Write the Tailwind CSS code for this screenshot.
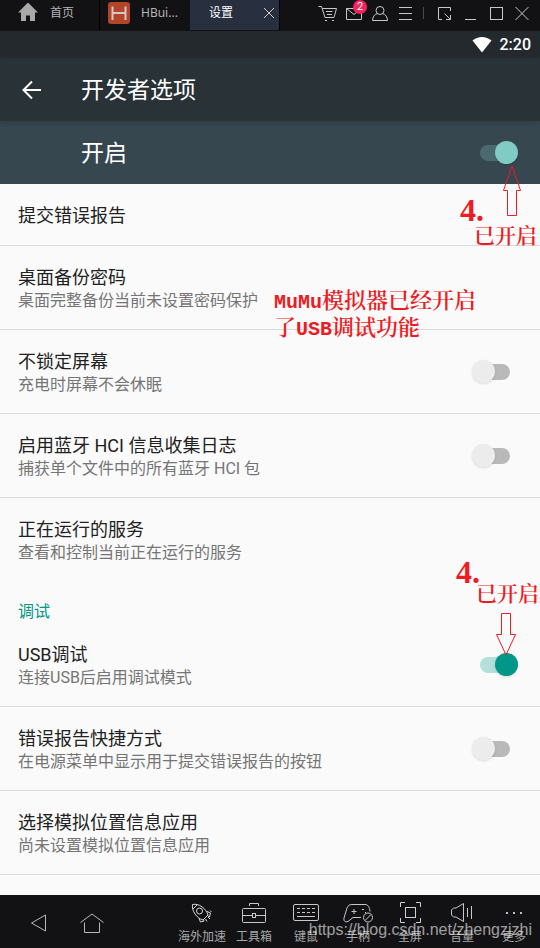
<!DOCTYPE html>
<html lang="zh-CN">
<head>
<meta charset="utf-8">
<meta name="viewport" content="width=device-width, initial-scale=1">
<title>开发者选项</title>
<script src="https://cdn.jsdelivr.net/npm/@tailwindcss/browser@4"></script>
</head>
<body class="bg-[#fafafa] font-[Roboto,'Noto_Sans_CJK_SC',sans-serif] text-[#212121]">
<div class="relative flex min-h-screen flex-col overflow-hidden">

  <!-- Emulator tab bar -->
  <div class="flex h-[31px] justify-between bg-[#121214] text-xs text-[#b4b4b4]">
    <nav class="flex h-[30px]">
      <a href="#" class="flex w-[100px] items-center gap-3 border-r border-black pb-1 pl-[18px]">
        <svg class="h-5 w-5" viewBox="0 1 20 20" fill="#a9a9a9"><path d="M10 0.500L20 10.500H17V19H12V13.500H8V19H3V10.500H0Z"/></svg>
        <span>首页</span>
      </a>
      <a href="#" class="flex w-[90px] items-center gap-[11px] pb-1 pl-2">
        <svg class="h-[22px] w-[22px]" viewBox="0 0 22 22" fill="none"><rect width="22" height="22" rx="3" fill="#b2452a"/><path d="M4.500 4.500V18M17.500 4.500V18M4.500 11H17.500" stroke="#d5c9c4" stroke-width="2"/></svg>
        <span class="font-['Noto_Sans','Noto_Sans_CJK_SC',sans-serif]">HBui...</span>
      </a>
      <div class="flex w-[90px] items-center justify-between border-r border-black bg-[#282f3f] pr-1 pb-1 pl-[19px] text-white">
        <a href="#">设置</a>
        <button aria-label="关闭标签"><svg class="h-3 w-3" viewBox="0 0 12 12" fill="none" stroke="#d0d0d0"><path d="M1 1L11 11M11 1L1 11"/></svg></button>
      </div>
    </nav>
    <div class="flex items-center gap-2 pr-[11px] pb-[5px]">
      <button aria-label="商城"><svg class="h-[18px] w-[19px]" viewBox="0 0 19 18" fill="none" stroke="#c8c8c8"><path d="M0.500 2.500H3.500L7 13.500H16M4.500 4.500H18.500L16 13.500M8 7.500H14.500M9 10.500H14"/><path d="M7 16.500H9M14 16.500H16"/></svg></button>
      <button aria-label="消息" class="relative"><svg class="h-[18px] w-[18px]" viewBox="0 0 18 18" fill="none" stroke="#c8c8c8"><path d="M1.500 4.500H16.500V15.500H1.500ZM1.500 4.500L9 10.500L16.500 4.500"/></svg>
        <span class="absolute -top-1 left-2 h-[14px] w-[14px] rounded-full bg-[#f6215f] text-center text-[11px] leading-[14px] text-white">2</span></button>
      <button aria-label="用户"><svg class="h-[18px] w-[18px]" viewBox="0 0 18 18" fill="none" stroke="#c8c8c8"><circle cx="9" cy="6.500" r="4"/><path d="M6.500 9.500C3 10.500 1.800 13 1.500 16.500H16.500C16.200 13 15 10.500 11.500 9.500"/></svg></button>
      <button aria-label="菜单"><svg class="h-[18px] w-[18px]" viewBox="0 0 18 18" fill="none" stroke="#c8c8c8"><path d="M2 3.500H15M2 9.500H15M2 15.500H15"/></svg></button>
      <span class="h-3 w-px bg-[#4a4a4c]"></span>
      <div class="flex items-center gap-2">
        <button aria-label="缩放" class="ml-1"><svg class="h-[18px] w-[18px]" viewBox="0 0 18 18" fill="none" stroke="#c8c8c8"><path d="M6 15.500H2.500V3.500H14.500V7M8.500 9.500L14.500 15.500M14.500 11V15.500H10"/></svg></button>
        <button aria-label="最小化"><svg class="h-[18px] w-[18px]" viewBox="0 0 18 18" fill="none" stroke="#c8c8c8"><path d="M3 15.500H14"/></svg></button>
        <button aria-label="最大化"><svg class="h-[18px] w-[18px]" viewBox="0 0 18 18" fill="none" stroke="#c8c8c8"><rect x="2.500" y="3.500" width="12" height="12"/></svg></button>
        <button aria-label="关闭"><svg class="h-[18px] w-[15px]" viewBox="0 0 15 18" fill="none" stroke="#c8c8c8"><path d="M1.500 3L14.500 16M14.500 3L1.500 16"/></svg></button>
      </div>
    </div>
  </div>

  <!-- Status bar -->
  <div class="flex h-[27px] items-center justify-end gap-2 bg-[#23292d] pr-[9px] text-white">
    <svg class="h-[17px] w-5" viewBox="0 0 20 17" fill="#fff"><path d="M0.500 4.500C6 -0.300 14 -0.300 19.500 4.500L10 16.500Z"/></svg>
    <span class="text-base font-medium">2:20</span>
  </div>

  <header class="z-10 flex h-[63px] items-center bg-[#283237] pl-5 text-white shadow-md">
    <button aria-label="返回" class="w-[61px]"><svg class="h-6 w-6" viewBox="0 0 24 24" fill="none" stroke="#fff" stroke-width="2"><path d="M21 12H4M12 3.500L3.500 12L12 20.500"/></svg></button>
    <h1 class="pt-[2px] text-[23px] leading-8">开发者选项</h1>
  </header>

  <label class="flex h-[63px] items-center justify-between bg-[#37474f] pr-[22px] pl-[81px] text-white">
    <span class="pt-[2px] text-[23px] leading-8">开启</span>
    <input type="checkbox" checked class="relative h-6 w-[46px] appearance-none before:absolute before:top-1 before:left-2 before:h-4 before:w-[30px] before:rounded-full before:bg-[#4b6a6f] after:absolute after:right-0 after:h-[23px] after:w-[23px] after:rounded-full after:bg-[#80cbc4] after:shadow-sm">
  </label>

  <main class="grow">
    <a href="#" class="block border-b border-[#dadada] px-[18px] pt-5 pb-[17px] text-lg leading-6">提交错误报告</a>
    <a href="#" class="block border-b border-[#dadada] px-[18px] pt-5 pb-[17px]">
      <span class="block text-lg leading-6">桌面备份密码</span>
      <span class="block text-base leading-[22px] text-[#757575]">桌面完整备份当前未设置密码保护</span>
    </a>
    <label class="flex items-center justify-between border-b border-[#dadada] pt-5 pr-[22px] pb-[17px] pl-[18px]">
      <span>
        <span class="block text-lg leading-6">不锁定屏幕</span>
        <span class="block text-base leading-[22px] text-[#757575]">充电时屏幕不会休眠</span>
      </span>
      <input type="checkbox" class="relative mb-[2px] h-6 w-[46px] appearance-none before:absolute before:top-1 before:left-2 before:h-4 before:w-[30px] before:rounded-full before:bg-[#b9b9b9] after:absolute after:left-0 after:h-[23px] after:w-[23px] after:rounded-full after:bg-[#ececec] after:shadow">
    </label>
    <label class="flex items-center justify-between border-b border-[#dadada] pt-5 pr-[22px] pb-[17px] pl-[18px]">
      <span>
        <span class="block text-lg leading-6">启用蓝牙 HCI 信息收集日志</span>
        <span class="block text-base leading-[22px] text-[#757575]">捕获单个文件中的所有蓝牙 HCI 包</span>
      </span>
      <input type="checkbox" class="relative mb-[2px] h-6 w-[46px] appearance-none before:absolute before:top-1 before:left-2 before:h-4 before:w-[30px] before:rounded-full before:bg-[#b9b9b9] after:absolute after:left-0 after:h-[23px] after:w-[23px] after:rounded-full after:bg-[#ececec] after:shadow">
    </label>
    <a href="#" class="block px-[18px] pt-5 pb-[18px]">
      <span class="block text-lg leading-6">正在运行的服务</span>
      <span class="block text-base leading-[22px] text-[#757575]">查看和控制当前正在运行的服务</span>
    </a>
    <h2 class="px-[18px] pt-[19px] text-base leading-[22px] text-[#009688]">调试</h2>
    <label class="flex items-center justify-between border-b border-[#dadada] pt-5 pr-[22px] pb-[17px] pl-[18px]">
      <span>
        <span class="block text-lg leading-6">USB调试</span>
        <span class="block text-base leading-[22px] text-[#757575]">连接USB后启用调试模式</span>
      </span>
      <input type="checkbox" checked class="relative mb-[2px] h-6 w-[46px] appearance-none before:absolute before:top-1 before:left-2 before:h-4 before:w-[30px] before:rounded-full before:bg-[#b5dfdb] after:absolute after:right-0 after:h-[23px] after:w-[23px] after:rounded-full after:bg-[#009688] after:shadow">
    </label>
    <label class="flex items-center justify-between border-b border-[#dadada] pt-5 pr-[22px] pb-[17px] pl-[18px]">
      <span>
        <span class="block text-lg leading-6">错误报告快捷方式</span>
        <span class="block text-base leading-[22px] text-[#757575]">在电源菜单中显示用于提交错误报告的按钮</span>
      </span>
      <input type="checkbox" class="relative mb-[2px] h-6 w-[46px] appearance-none before:absolute before:top-1 before:left-2 before:h-4 before:w-[30px] before:rounded-full before:bg-[#b9b9b9] after:absolute after:left-0 after:h-[23px] after:w-[23px] after:rounded-full after:bg-[#ececec] after:shadow">
    </label>
    <a href="#" class="block border-b border-[#dadada] px-[18px] pt-5 pb-[17px]">
      <span class="block text-lg leading-6">选择模拟位置信息应用</span>
      <span class="block text-base leading-[22px] text-[#757575]">尚未设置模拟位置信息应用</span>
    </a>
  </main>

  <!-- Emulator toolbar -->
  <footer class="relative flex h-[53px] items-center justify-between bg-[#121214] text-xs text-[#a8a8a8]">
    <div class="flex items-center gap-8 pt-[2px] pl-[30px]">
      <button aria-label="后退"><svg class="h-[18px] w-[18px]" viewBox="0 0 18 18" fill="none" stroke="#b8b8b8"><path d="M15.500 1L1.500 9L15.500 17Z"/></svg></button>
      <button aria-label="主屏幕"><svg class="h-5 w-6" viewBox="0 0 24 20" fill="none" stroke="#b8b8b8"><path d="M0.500 9.500L12 1L23.500 9.500M4.500 9.500V19.500H19.500V9.500"/></svg></button>
    </div>
    <div class="flex pt-[2px]">
      <button class="flex w-[52px] flex-col items-center gap-1 whitespace-nowrap"><svg class="h-6 w-6" viewBox="0 0 24 24" fill="none" stroke="#d8d8d8"><path d="M2.500 3.500C9 2 16 7.500 18 14L13 19C6.500 17 1.500 10 2.500 3.500ZM3 8L7.500 3.500"/><circle cx="9.500" cy="10" r="3"/><path d="M17 10.500L20.500 12L19.500 16L17.500 14.500M9 17.500L10.500 21L14 20L13.500 18.500M18 16L20 18M15.500 18L17 20.500M20 9.500L21.500 11"/></svg><span class="leading-4">海外加速</span></button>
      <button class="flex w-[52px] flex-col items-center gap-1 whitespace-nowrap"><svg class="h-6 w-6" viewBox="0 0 24 24" fill="none" stroke="#c8c8c8"><rect x=".5" y="7.500" width="23" height="14" rx="1"/><path d="M7.500 5V2.500H16.500V5M0.500 14.500H10M14 14.500H23.500"/><rect x="10.500" y="12.500" width="3" height="4"/></svg><span class="leading-4">工具箱</span></button>
      <button class="flex w-[52px] flex-col items-center gap-1 whitespace-nowrap"><svg class="h-6 w-[26px]" viewBox="0 0 26 24" fill="none" stroke="#c8c8c8"><rect x=".5" y="3.500" width="25" height="16" rx="1.500"/><path d="M4 7.500H22M4 11.500H22" stroke-dasharray="3 2"/><path d="M4 15.500H22"/></svg><span class="leading-4">键鼠</span></button>
      <button class="flex w-[52px] flex-col items-center gap-1 whitespace-nowrap"><svg class="h-6 w-[30px]" viewBox="0 1 30 24" fill="none" stroke="#c8c8c8"><path d="M18 17.500H10L5 21.500C2 22.500 0.500 21 1 18L4 8C5 5.500 6.500 4.500 9 4.500H22C25 4.500 26.500 7 27 11.500M8.500 11.500H13.500M11 9V14M19 9.500H21M22 12.500H23"/><circle cx="25" cy="17.500" r="4.500"/><path d="M22 20.500L28 14.500"/></svg><span class="leading-4">手柄</span></button>
      <button class="flex w-[52px] flex-col items-center gap-1 whitespace-nowrap"><svg class="h-6 w-6" viewBox="0 1 24 24" fill="none" stroke="#d0d0d0"><path d="M2.500 7V2.500H7M18 2.500H22.500V7M22.500 18V22.500H18M7 22.500H2.500V18"/><rect x="7.500" y="7.500" width="10" height="10"/></svg><span class="leading-4">全屏</span></button>
      <button class="flex w-[52px] flex-col items-center gap-1 whitespace-nowrap"><svg class="h-6 w-6" viewBox="0 1 24 24" fill="none" stroke="#c8c8c8"><path d="M6 8L13.500 3.500V21.500L6 17H3.500L1.500 15V10L3.500 8ZM17.500 8V17M21.500 6V19"/></svg><span class="leading-4">音量</span></button>
      <button class="flex w-[52px] flex-col items-center gap-1 whitespace-nowrap"><svg class="h-6 w-6" viewBox="0 1 24 24" fill="#c0c0c0"><path d="M4 12h2v2H4zM11 12h2v2h-2zM18 12h2v2h-2z"/></svg><span class="leading-4">更多</span></button>
    </div>
    <span class="pointer-events-none absolute right-2 bottom-2 font-['Liberation_Sans',sans-serif] text-base leading-5 text-white/60">https://blog.csdn.net/zhengzjzhi</span>
  </footer>

  <!-- Tutorial annotations laid over the screen -->
  <div class="pointer-events-none absolute inset-0 z-20 font-['Liberation_Serif','Noto_Serif_CJK_SC','Noto_Sans_CJK_SC',serif] text-[#ed1c24]">
    <span class="absolute top-[194px] right-[56px] text-[32px] leading-8 font-semibold">4.</span>
    <span class="absolute top-[224px] right-[3px] text-[21px] leading-6 font-semibold">已开启</span>
    <svg class="absolute top-[165px] right-[18px] h-[52px] w-5" viewBox="0 0 20 52" fill="none" stroke="#ed1c24"><path d="M10 1L18.500 25.500H14.500V50.500H5.500V25.500H1.500Z"/></svg>
    <p class="absolute top-[287px] left-[274px] text-[22px] leading-[27px] font-semibold whitespace-nowrap"><span class="font-['Liberation_Mono',monospace] text-xl leading-none">MuMu</span>模拟器已经开启<br>了<span class="font-['Liberation_Mono',monospace] text-xl leading-none">USB</span>调试功能</p>
    <span class="absolute top-[556px] right-[60px] text-[32px] leading-8 font-semibold">4.</span>
    <span class="absolute top-[582px] right-[1px] text-[21px] leading-6 font-semibold">已开启</span>
    <svg class="absolute top-[612px] right-[24px] h-[44px] w-5" viewBox="0 0 20 44" fill="none" stroke="#ed1c24"><path d="M5.500 1.500H14.500V22.500H19.500L10 43L0.500 22.500H5.500Z"/></svg>
  </div>
</div>
</body>
</html>
